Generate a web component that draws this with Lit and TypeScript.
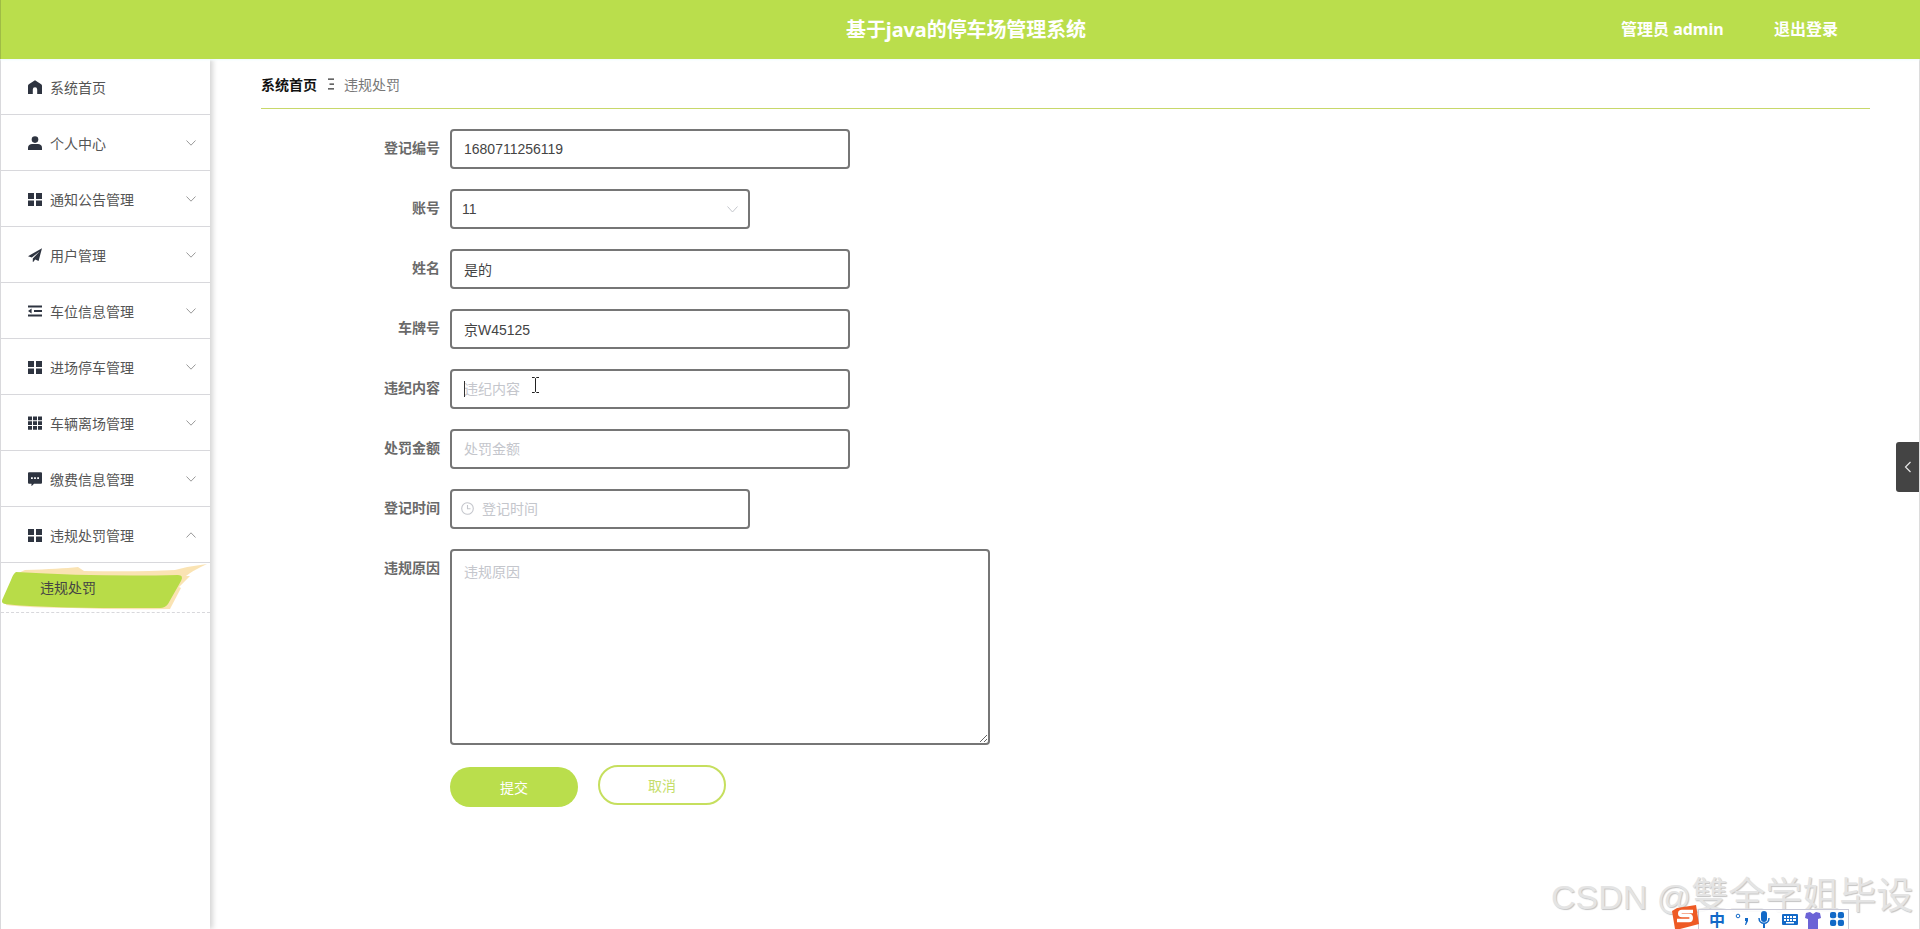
import { LitElement, html, css, svg } from "lit";
import { customElement } from "lit/decorators.js";

const gridIcon = svg`<path d="M0 1h6v6H0zM8 1h6v6H8zM0 8.500h6v5.500H0zM8 8.500h6v5.500H8z"/>`;
const icons: Record<string, unknown> = {
  home: svg`<path d="M7 .3 .8 4.200Q0 4.800 0 5.800V14h4.800V9.500a2.200 2.200 0 0 1 4.400 0V14H14V5.800q0-1-.8-1.600z"/>`,
  user: svg`<circle cx="7" cy="3.600" r="3.300"/><path d="M0 14v-2.600C0 9.200 2 7.900 4 7.900h6c2 0 4 1.300 4 3.500V14z"/>`,
  grid: gridIcon,
  plane: svg`<path d="M14 .2 0 8.200l3.800 1.300L11.500 3.500 4.800 10.500V14.500l2.400-3 3.400 1.400z"/>`,
  indent: svg`<path d="M0 1.500h14v2H0zM6 6h8v2H6zM0 10.500h14v2H0zM3.600 4.600v4.800L0 7z"/>`,
  apps: svg`<path d="M0 .5h4v3.800H0zM5 .5h4v3.800H5zM10 .5h4v3.800h-4zM0 5.200h4V9H0zM5 5.200h4V9H5zM10 5.200h4V9h-4zM0 10h4v3.800H0zM5 10h4v3.800H5zM10 10h4v3.800h-4z"/>`,
  chat: svg`<path fill-rule="evenodd" d="M1 .3h12a1 1 0 0 1 1 1v9.500a1 1 0 0 1-1 1H6L3.500 14.300v-2.500H1a1 1 0 0 1-1-1V1.300a1 1 0 0 1 1-1zM3 5.200v1.800h1.800V5.200zM6.100 5.200v1.800h1.800V5.200zM9.200 5.200v1.800H11V5.200z"/>`,
};

const menu = [
  ["home", "系统首页", ""],
  ["user", "个人中心", "d"],
  ["grid", "通知公告管理", "d"],
  ["plane", "用户管理", "d"],
  ["indent", "车位信息管理", "d"],
  ["grid", "进场停车管理", "d"],
  ["apps", "车辆离场管理", "d"],
  ["chat", "缴费信息管理", "d"],
  ["grid", "违规处罚管理", "u"],
];

@customElement("app-root")
export class AppRoot extends LitElement {
  static styles = css`
    :host { display: block; }
    * { box-sizing: border-box; }
    .app {
      position: relative; height: 929px; overflow: hidden; background: #fff;
      font-family: "Liberation Sans", "Noto Sans CJK SC", sans-serif;
      font-size: 14px; color: #555;
      display: flex; flex-direction: column;
    }
    .top {
      flex: none; height: 59px; background: #bade4c; color: #fff;
      display: flex; align-items: center; border-left: 1px solid #9fbc45;
      position: relative;
      box-shadow: 0 1px 2px #eefaff;
    }
    .title {
      margin-left: 845px; font: bold 20px/24px "Noto Sans", "Noto Sans CJK SC", sans-serif;
      width: 241px; white-space: nowrap; letter-spacing: -.1px; margin-top: 1px;
    }
    .user { margin-left: 534px; font: bold 16px/20px "Noto Sans", "Noto Sans CJK SC", sans-serif; width: 153px; margin-top: -1px; white-space: nowrap; }
    .out { font: bold 16px/20px "Noto Sans", "Noto Sans CJK SC", sans-serif; margin-top: -1px; white-space: nowrap; }
    .body { flex: 1; display: flex; min-height: 0; border-right: 1px solid #dcdcdc; }
    .side {
      flex: none; width: 210px; border-left: 1px solid #d9d9dc; background: #fff;
      box-shadow: 3px 0 5px rgba(0,0,0,.16);
    }
    .item {
      height: 56px; display: flex; align-items: center; padding-left: 27px;
      border-bottom: 1px solid #d8d8dc; color: #555;
    }
    .item svg.ic { width: 14px; height: 14px; fill: #2e3440; flex: none; }
    .item span { margin-left: 8px; flex: 1; }
    .chev { width: 10px; height: 6px; margin-right: 14px; flex: none; fill: none; stroke: #9a9a9a; stroke-width: 1; }
    .sub {
      height: 50px; position: relative; border-bottom: 1px dashed #d8d8dc;
      display: flex; align-items: center; padding-left: 39px; color: #444;
    }
    .brush { position: absolute; left: -1px; top: 0; width: 210px; height: 50px; }
    .sub span { position: relative; margin-top: -1px; }
    .main { flex: 1; padding: 0 49px 0 51px; min-width: 0; }
    .crumb {
      height: 50px; border-bottom: 1px solid #c8d86a; display: flex; align-items: center;
      margin-bottom: 20px; padding-top: 0;
    }
    .crumb b { color: #111; }
    .crumb svg { width: 6px; height: 12px; margin: 0 10px 0 11px; fill: #333; }
    .crumb i { font-style: normal; color: #777; }
    .row { display: flex; margin-bottom: 20px; height: 40px; }
    .row.tall { height: 196px; margin-bottom: 20px; }
    label { width: 179px; margin-right: 10px; text-align: right; line-height: 39px; font-weight: bold; color: #6a6a6a; flex: none; }
    input, textarea, .sel {
      font: 14px "Liberation Sans", "Noto Sans CJK SC", sans-serif; color: #444;
      border: 2px solid #767676; border-radius: 4px; background: #fff; outline: none;
      height: 40px; width: 400px; padding: 0 12px; display: block;
    }
    input::placeholder, textarea::placeholder { color: #c4c6cc; opacity: 1; }
    .sel { width: 300px; display: flex; align-items: center; justify-content: space-between; padding: 0 10px; }
    .sel svg { width: 11px; height: 7px; fill: none; stroke: #c4c6cc; margin-right: 0; }
    .date { width: 300px; display: flex; align-items: center; border: 2px solid #767676; border-radius: 4px; height: 40px; padding-left: 9px; }
    .date svg { width: 13px; height: 13px; fill: none; stroke: #c4c6cc; stroke-width: 1.100; flex: none; margin-top: -2px; }
    .date input { border: 0; height: 34px; width: 260px; padding: 0 0 0 8px; }
    textarea { width: 540px; height: 196px; padding: 11px 12px; line-height: 20px; resize: both; }
    .btns { display: flex; padding-left: 189px; align-items: flex-start; }
    .btn { width: 128px; height: 40px; border-radius: 20px; font: 14px "Liberation Sans", "Noto Sans CJK SC", sans-serif; border: 0; padding: 0; }
    .ok { background: #bade4c; color: #fff; margin-top: 2px; }
    .no { background: #fff; color: #c5de6a; border: 2px solid #c6df5e; margin-left: 20px; }
    .handle {
      position: absolute; right: 1px; top: 442px; width: 23px; height: 50px; background: #444;
      border-radius: 3px 0 0 3px; display: flex; align-items: center; justify-content: center;
    }
    .handle svg { width: 8px; height: 12px; fill: none; stroke: #e6e6e6; stroke-width: 1.200; }
    .ibeam { position: absolute; left: 531px; top: 377px; width: 9px; height: 16px; fill: none; stroke: #222; }
    .caret { position: absolute; left: 464px; top: 381px; width: 1px; height: 16px; background: #333; }
    .mark {
      position: absolute; left: 1551px; top: 875px; font: 34px/44px "Liberation Sans", "Noto Sans CJK SC", sans-serif;
      color: #e4e4e4; text-shadow: 1px 1px 1px #c4c4c4; white-space: nowrap;
    }
    .mark span { font-size: 37px; }
    .ime {
      position: absolute; left: 1698px; top: 909px; width: 151px; height: 20px;
      border: 1px solid #c9c9d6; border-bottom: 0; background: rgba(255,255,255,.9);
      color: #1269c7;
    }
    .ime b { position: absolute; left: 10px; top: -1px; font: bold 16px/20px "Noto Sans CJK SC", sans-serif; }
    .ime svg { position: absolute; top: 0; height: 20px; width: 16px; fill: #1269c7; }
    .sogou { position: absolute; left: 1672px; top: 905px; width: 27px; height: 24px; }
    .shirt { position: absolute; left: 1805px; top: 912px; width: 16px; height: 17px; fill: #6b63d6; }
    .tiles { position: absolute; left: 1830px; top: 912px; width: 14px; height: 14px; fill: #1269c7; }
  `;

  render() {
    return html`<div class="app">
      <div class="top">
        <div class="title">基于java的停车场管理系统</div>
        <div class="user">管理员 admin</div>
        <div class="out">退出登录</div>
      </div>
      <div class="body">
        <div class="side">
          ${menu.map(([ic, t, c]) => html`<div class="item">
            <svg class="ic" viewBox="0 0 14 14">${icons[ic]}</svg>
            <span>${t}</span>
            ${c ? html`<svg class="chev" viewBox="0 0 10 6"><path d=${c === "d" ? "M.5.5 5 5.200 9.500.5" : "M.5 5.500 5 .8l4.500 4.700"}/></svg>` : ""}
          </div>`)}
          <div class="sub">
            <svg class="brush" viewBox="0 0 210 50">
              <path d="M25 7 Q60 6 78 4 L84 8 Q140 9 175 7 Q190 3 207 1 Q192 8 186 13 L190 13 L179 24 L181 25 L170 46 Q120 47 72 45 Q30 45 6 42 L14 12z" fill="#f9dca0" opacity=".8"/>
              <path d="M16 9 Q100 14 178 12 Q184 12 181 18 L168 41 Q165 45 160 45 L100 45 Q30 44 5 41 Q0 40 3 35 L11 17 Q13 11 16 9z" fill="#b8dc48"/>
            </svg>
            <span>违规处罚</span>
          </div>
        </div>
        <div class="main">
          <div class="crumb">
            <b>系统首页</b>
            <svg viewBox="0 0 6 12"><path d="M0 .5h6v1.300H0zM1.500 5.400h4.500v1.300H1.500zM0 10.200h6v1.300H0z"/></svg>
            <i>违规处罚</i>
          </div>
          <div class="row"><label>登记编号</label><input .value=${"1680711256119"} /></div>
          <div class="row"><label>账号</label><div class="sel"><span>11</span><svg viewBox="0 0 11 7"><path d="M.5.5 5.500 6l5-5.500"/></svg></div></div>
          <div class="row"><label>姓名</label><input .value=${"是的"} /></div>
          <div class="row"><label>车牌号</label><input .value=${"京W45125"} /></div>
          <div class="row"><label>违纪内容</label><input placeholder="违纪内容" /></div>
          <div class="row"><label>处罚金额</label><input placeholder="处罚金额" /></div>
          <div class="row"><label>登记时间</label><div class="date"><svg viewBox="0 0 13 13"><circle cx="6.500" cy="6.500" r="5.800"/><path d="M6.500 3v3.800h3"/></svg><input placeholder="登记时间" /></div></div>
          <div class="row tall"><label>违规原因</label><textarea placeholder="违规原因"></textarea></div>
          <div class="btns"><button class="btn ok">提交</button><button class="btn no">取消</button></div>
        </div>
      </div>
      <div class="handle"><svg viewBox="0 0 8 12"><path d="M6.500 1 1.500 6l5 5"/></svg></div>
      <div class="caret"></div>
      <svg class="ibeam" viewBox="0 0 9 16"><path d="M1 .5h2.500L4.500 1.500 5.500.5H8M4.500 1.500v13M1 15.500h2.500l1-1 1 1H8"/></svg>
      <div class="mark">CSDN @<span>雙全学姐毕设</span></div>
      <div class="ime">
        <b>中</b>
        <svg style="left:36px" viewBox="0 0 16 20"><circle cx="3" cy="6" r="1.800" fill="none" stroke="#1269c7"/><path d="M10 8h3v3l-2 4h-1l1-4h-1z"/></svg>
        <svg style="left:57px" viewBox="0 0 16 20"><rect x="5" y="1" width="6" height="11" rx="3"/><path d="M3 8c0 7 10 7 10 0" fill="none" stroke="#1269c7" stroke-width="1.500"/><path d="M7 14h2v4H7z"/></svg>
        <svg style="left:83px" viewBox="0 0 16 20"><path fill-rule="evenodd" d="M1 4h14a1 1 0 0 1 1 1v9a1 1 0 0 1-1 1H1a1 1 0 0 1-1-1V5a1 1 0 0 1 1-1zM2 6v2h2V6zM5 6v2h2V6zM8 6v2h2V6zM11 6v2h3V6zM2 9v2h2V9zM5 9v2h2V9zM8 9v2h2V9zM11 9v2h3V9zM4 12v1.500h8V12z"/></svg>
      </div>
      <svg class="sogou" viewBox="0 0 27 24"><path d="M5 3 24 0l3 19-19 5H3L0 6z" fill="#ee5a24"/><path d="M21 6.500H10c-3 0-3 4 0 4h7c3 0 3 5 0 5H5" fill="none" stroke="#fff" stroke-width="3.500"/></svg>
      <svg class="shirt" viewBox="0 0 16 17"><path d="M1 1l4-1 3 2 3-2 4 1 1 5-3 1v10H3V7L0 6z"/></svg>
      <svg class="tiles" viewBox="0 0 14 14"><rect width="6.200" height="6.200" rx="2"/><rect x="7.800" width="6.200" height="6.200" rx="2"/><rect y="7.800" width="6.200" height="6.200" rx="2"/><rect x="7.800" y="7.800" width="6.200" height="6.200" rx="2"/></svg>
    </div>`;
  }
}
